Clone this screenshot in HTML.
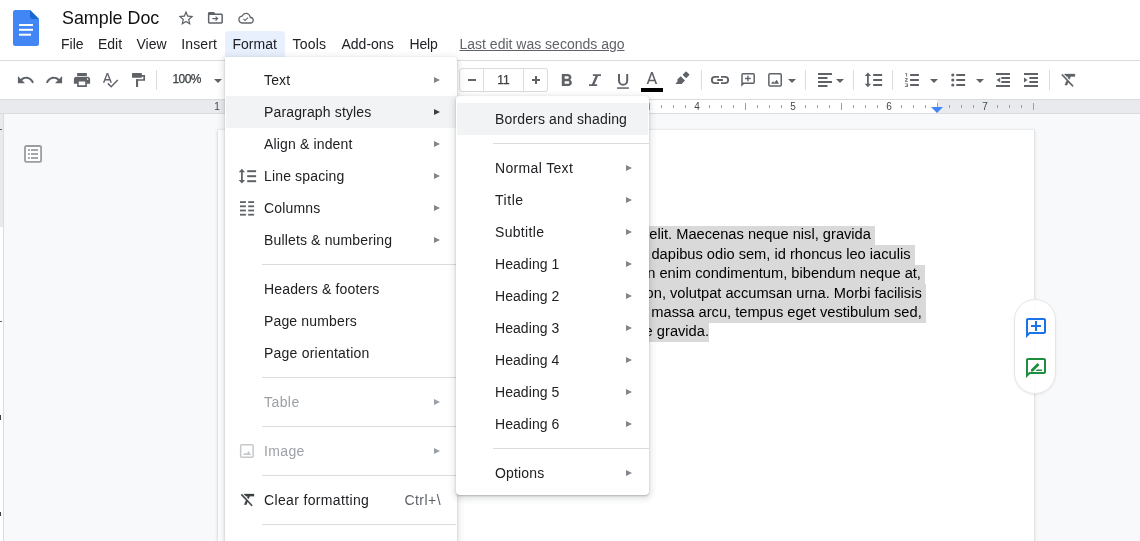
<!DOCTYPE html>
<html lang="en">
<head>
<meta charset="utf-8">
<title>Sample Doc - Google Docs</title>
<style>
*{box-sizing:border-box;margin:0;padding:0}
html,body{width:1140px;height:541px;overflow:hidden;background:#f8f9fa}
body{position:relative;will-change:transform;font-family:"Liberation Sans",Arial,sans-serif;color:#202124;font-size:14px}
.abs{position:absolute}
#header{left:0;top:0;width:1140px;height:60px;background:#fff}
#hborder{left:0;top:60px;width:1140px;height:1px;background:#dadce0}
#toolbar{left:0;top:61px;width:1140px;height:38px;background:#fff}
#title{left:62px;top:6px;font-size:19px;line-height:24px;white-space:nowrap;color:#111;transform-origin:0 50%;transform:scaleX(.94)}
.mb{position:absolute;top:31px;height:26px;line-height:26px;white-space:nowrap;font-size:14px;color:#202124}
#fmtbg{left:225px;top:31px;width:60px;height:27px;background:#e8f0fe;border-radius:4px 4px 0 0}
#lastedit{color:#5f6368;text-decoration:underline;text-underline-offset:1px}
.sep{position:absolute;top:70px;width:1px;height:20px;background:#dadce0}
.dd{position:absolute;top:79px;width:0;height:0;border-left:4px solid transparent;border-right:4px solid transparent;border-top:4px solid #5f6368}
.tt{position:absolute;font-size:12px;line-height:16px;color:#3c4043;white-space:nowrap;-webkit-text-stroke:.25px #3c4043}
#ruler{left:0;top:99px;width:1140px;height:15px;background:#e8eaed;border-top:1px solid #dadce0;border-bottom:1px solid #dadce0}
#rulerw{left:314px;top:100px;width:623px;height:13px;background:#fff}
.rn{position:absolute;top:100px;font-size:10px;line-height:13px;color:#444746;width:12px;text-align:center}
#vruler{left:0;top:114px;width:4px;height:427px;background:#fff;border-right:1px solid #dadce0}
#vrulerg{left:0;top:114px;width:3px;height:113px;background:#e8eaed}
.vt{position:absolute;left:0;width:1.500px;height:1px;background:#5f6368}
#page{left:218px;top:130px;width:816px;height:420px;background:#fff;box-shadow:0 0 0 1px rgba(0,0,0,.025),0 1px 3px 1px rgba(60,64,67,.13)}
.ln{position:absolute;white-space:pre;font-size:14.6667px;line-height:15px;color:#000;background:#d9d9d9}
.menu{position:absolute;background:#fff;box-shadow:0 2px 6px 2px rgba(60,64,67,.15),0 1px 2px 0 rgba(60,64,67,.3)}
.mi{position:absolute;left:1px;height:32px;line-height:32px;font-size:14px;white-space:nowrap;color:#202124;letter-spacing:.15px}
.mi.hl{background:#f1f3f4}
.mi span.t{position:absolute;top:0}
.mi.dis{color:#9da1a7}
.msep{position:absolute;height:1px;background:#dadce0}
.arr{position:absolute;width:0;height:0;border-top:3px solid transparent;border-bottom:3px solid transparent;border-left:6px solid #80868b;top:13px}
.dis .arr{border-left-color:#9aa0a6}
.sc{position:absolute;right:15px;top:0;color:#5f6368;letter-spacing:.45px}
#pill{left:1014px;top:299px;width:41.500px;height:95px;border-radius:21px;background:rgba(255,255,255,.93);border:1px solid #e4e5e7;box-shadow:0 1px 2px rgba(60,64,67,.10)}
</style>
</head>
<body>
<div id="header" class="abs"></div>
<div id="hborder" class="abs"></div>
<div id="toolbar" class="abs"></div>

<!-- Docs logo -->
<svg class="abs" style="left:13px;top:10px" width="26" height="36" viewBox="0 0 26 36">
<path d="M2.500 0H17l9 9v24.500a2.500 2.500 0 0 1-2.500 2.500h-21A2.500 2.500 0 0 1 0 33.500v-31A2.500 2.500 0 0 1 2.500 0z" fill="#4285f4"/>
<path d="M17 0l9 9h-6.500A2.500 2.500 0 0 1 17 6.500z" fill="#1967d2"/>
<rect x="6" y="14" width="14" height="2" fill="#fff"/><rect x="6" y="18.800" width="14" height="2" fill="#fff"/><rect x="6" y="23.700" width="12" height="2" fill="#fff"/>
</svg>

<div id="title" class="abs">Sample Doc</div>

<!-- menubar -->
<div id="fmtbg" class="abs"></div>
<div class="mb" style="left:61px">File</div>
<div class="mb" style="left:98px">Edit</div>
<div class="mb" style="left:136.500px">View</div>
<div class="mb" style="left:181.200px;letter-spacing:.15px">Insert</div>
<div class="mb" style="left:232.500px">Format</div>
<div class="mb" style="left:292.500px;letter-spacing:.2px">Tools</div>
<div class="mb" style="left:341.500px">Add-ons</div>
<div class="mb" style="left:409.500px;letter-spacing:-.2px">Help</div>
<div class="mb" id="lastedit" style="left:459.500px">Last edit was seconds ago</div>

<!-- toolbar -->
<svg class="abs" style="left:0;top:0" width="1140" height="100" viewBox="0 0 1140 100" fill="#5f6368">
<path transform="translate(177.000,8.974) scale(0.7500,0.7632)" d="M22 9.24l-7.19-.62L12 2 9.19 8.63 2 9.24l5.46 4.73L5.82 21 12 17.27 18.18 21l-1.63-7.03L22 9.24zM12 15.4l-3.76 2.27 1-4.28-3.32-2.88 4.38-.38L12 6.1l1.71 4.04 4.38.38-3.32 2.88 1 4.28L12 15.4z" />
<path transform="translate(206.400,8.925) scale(0.7500,0.7438)" d="M20 6h-8l-2-2H4c-1.100 0-2 .9-2 2v12c0 1.100.9 2 2 2h16c1.100 0 2-.9 2-2V8c0-1.100-.9-2-2-2zm0 12H4V8h16v10zm-7.300-1.700L16 13l-3.300-3.300-1.050 1.050 1.500 1.500H8v1.500h5.150l-1.500 1.500z" />
<path transform="translate(238.200,9.950) scale(0.6542,0.6875)" d="M19.35 10.04C18.67 6.59 15.64 4 12 4 9.11 4 6.6 5.64 5.35 8.04 2.34 8.36 0 10.91 0 14c0 3.31 2.69 6 6 6h13c2.76 0 5-2.24 5-5 0-2.64-2.05-4.78-4.65-4.960zM19 18H6c-2.21 0-4-1.79-4-4 0-2.050 1.53-3.76 3.56-3.97l1.07-.11.5-.95C8.08 7.14 9.94 6 12 6c2.62 0 4.88 1.86 5.39 4.43l.3 1.5 1.53.11c1.56.1 2.78 1.41 2.78 2.96 0 1.65-1.350 3-3 3zm-8.500-3.600l-1.900-1.900-1.100 1.100 3 3 5-5-1.100-1.100z" />
<path transform="translate(16.337,70.400) scale(0.7816,0.8000)" d="M12.5 8c-2.65 0-5.05.99-6.9 2.6L2 7v9h9l-3.62-3.62c1.39-1.16 3.16-1.88 5.12-1.88 3.54 0 6.55 2.31 7.6 5.5l2.37-.78C21.08 11.03 17.15 8 12.5 8z" />
<path transform="translate(44.788,70.400) scale(0.7869,0.8000)" d="M18.4 10.6C16.55 8.99 14.15 8 11.5 8c-4.65 0-8.58 3.03-9.96 7.22L3.9 16c1.05-3.19 4.05-5.5 7.6-5.5 1.95 0 3.73.72 5.12 1.88L13 16h9V7l-3.6 3.6z" />
<path transform="translate(72.280,70.567) scale(0.8100,0.7778)" d="M19 8H5c-1.66 0-3 1.34-3 3v6h4v4h12v-4h4v-6c0-1.66-1.34-3-3-3zm-3 11H8v-5h8v5zm3-7c-.55 0-1-.45-1-1s.45-1 1-1 1 .45 1 1-.45 1-1 1zm-1-9H6v4h12V3z" />
<path transform="translate(101.056,70.608) scale(0.7498,0.7641)" d="M12.45 16h2.09L9.43 3H7.57L2.46 16h2.09l1.12-3h5.64l1.14 3zm-6.02-5L8.5 5.48 10.57 11H6.43zm15.16.59l-8.09 8.09L9.83 16l-1.41 1.41 5.09 5.09L23 13l-1.41-1.41z" />
<rect x="132" y="73.100" width="9.900" height="4.700" rx=".6"/>
<path d="M141.500 75.900H144.200V80H137.100V86.900" fill="none" stroke="#5f6368" stroke-width="1.700"/><rect x="136.100" y="79.200" width="2" height="7.700"/>
<path transform="translate(555.223,70.600) scale(0.9395,0.8500)" d="M15.6 10.79c.97-.67 1.65-1.77 1.65-2.79 0-2.26-1.75-4-4-4H7v14h7.04c2.09 0 3.71-1.7 3.71-3.79 0-1.52-.86-2.82-2.15-3.42zM10 6.5h3c.83 0 1.5.67 1.5 1.5s-.67 1.5-1.5 1.5h-3v-3zm3.5 9H10v-3h3.5c.83 0 1.5.67 1.5 1.5s-.67 1.5-1.5 1.5z" />
<path d="M592.900 74.200H601V75.900H598.100L594.500 84.200H597.100V85.900H589V84.200H591.900L595.500 75.900H592.900z"/>
<path d="M619 74V80.700a4.100 4.100 0 0 0 8.200 0V74" fill="none" stroke="#5f6368" stroke-width="2"/><rect x="617.100" y="87.300" width="11.800" height="1.500"/>
<path transform="translate(642.112,69.450) scale(0.8160,0.8500)" d="M11 3L5.5 17h2.25l1.12-3h6.25l1.12 3h2.25L13 3h-2zm-1.38 9L12 5.67 14.38 12H9.62z" />
<rect x="641" y="88" width="22" height="4" fill="#000"/>
<rect x="683.550" y="72.250" width="5.100" height="5.100" rx=".8" transform="rotate(45 686.100 74.800)"/>
<path d="M680.700 76.200L685 80.500L681.600 83.900H675.400L677.600 81.300L677.300 79.600z"/>
<path d="M719 76.850H715a3.150 3.150 0 0 0 0 6.300H719M721 76.850H725a3.150 3.150 0 0 1 0 6.300H721" fill="none" stroke="#5f6368" stroke-width="1.900"/><rect x="717.200" y="79" width="5.700" height="2"/>
<rect x="742" y="73.850" width="12.200" height="9.500" rx="1" fill="none" stroke="#5f6368" stroke-width="1.500"/><path d="M741.250 83V86.800L745 83z"/><rect x="745" y="77.800" width="5.800" height="1.400"/><rect x="747.200" y="75.700" width="1.400" height="5.600"/>
<rect x="768.850" y="73.850" width="12.400" height="12.200" rx="1.200" fill="none" stroke="#5f6368" stroke-width="1.500"/><path d="M771 83.700L773 81.200L774.300 82.700L776.700 79.800L779 83.700z"/>
<rect x="818" y="73" width="14" height="2"/><rect x="818" y="77" width="9.500" height="2"/><rect x="818" y="81" width="14" height="2"/><rect x="818" y="85" width="9.500" height="2"/>
<path d="M867.9000000000001 72.6L871.1 76.1H868.8000000000001V83.8H871.1L867.9000000000001 87.3L864.7 83.8H867.0V76.1H864.7z"/><rect x="873.2" y="74.0" width="8.900" height="2"/><rect x="873.2" y="79.0" width="8.900" height="2"/><rect x="873.2" y="84.0" width="8.900" height="2"/>
<rect x="910.100" y="74" width="8.800" height="2"/><rect x="910.100" y="79" width="8.800" height="2"/><rect x="910.100" y="84" width="8.800" height="2"/>
<path d="M905.300 73.300H907.100V76.600H906.200V74.100H905.300zM904.900 78.300H907.800V79L906 81H907.800V81.700H904.900V81L906.700 79H904.900zM904.900 83.400H907.800V86.900H904.900V86.200H907V85.500H905.800V84.800H907V84.100H904.900z"/>
<rect x="956.300" y="74" width="8.800" height="2"/><rect x="956.300" y="79" width="8.800" height="2"/><rect x="956.300" y="84" width="8.800" height="2"/><circle cx="952.800" cy="75" r="1.600"/><circle cx="952.800" cy="80" r="1.600"/><circle cx="952.800" cy="85" r="1.600"/>
<rect x="996" y="73" width="14" height="2"/><rect x="1001.300" y="77" width="8.700" height="2"/><rect x="1001.300" y="81" width="8.700" height="2"/><rect x="996" y="85" width="14" height="2"/><path d="M1000.200 77.500V82.500L996.600 80z"/>
<rect x="1024" y="73" width="14" height="2"/><rect x="1029.300" y="77" width="8.700" height="2"/><rect x="1029.300" y="81" width="8.700" height="2"/><rect x="1024" y="85" width="14" height="2"/><path d="M1024 77.500V82.500L1027.600 80z"/>
<path transform="translate(1060.011,70.162) scale(0.7444,0.7875)" d="M3.27 5L2 6.27l6.97 6.97L6.5 19h3l1.57-3.66L16.73 21 18 19.73 3.55 5.27 3.27 5zM6 5v.18L8.82 8h2.4l-.72 1.68 2.1 2.1L14.21 8H20V5H6z" stroke="#5f6368" stroke-width=".5"/>
</svg>
<div class="sep" style="left:156px"></div>
<div class="tt" style="left:172.500px;top:71px;letter-spacing:-.6px">100%</div>
<div class="dd" style="left:214px"></div>
<div class="abs" style="left:459px;top:68px;width:89px;height:24px;border:1px solid #dadce0;border-radius:3px"></div>
<div class="abs" style="left:483px;top:69px;width:1px;height:22px;background:#dadce0"></div>
<div class="abs" style="left:523px;top:69px;width:1px;height:22px;background:#dadce0"></div>
<div class="abs" style="left:468px;top:79px;width:8px;height:2px;background:#5f6368"></div>
<div class="tt" style="left:484px;top:72px;width:39px;text-align:center">11</div>
<div class="abs" style="left:532px;top:79px;width:8px;height:2px;background:#5f6368"></div>
<div class="abs" style="left:535px;top:76px;width:2px;height:8px;background:#5f6368"></div>
<div class="sep" style="left:701px"></div>
<div class="dd" style="left:788px"></div>
<div class="sep" style="left:805px"></div>
<div class="dd" style="left:836px"></div>
<div class="sep" style="left:853px"></div>
<div class="sep" style="left:892px"></div>
<div class="dd" style="left:930px"></div>
<div class="dd" style="left:976px"></div>
<div class="sep" style="left:1049px"></div>

<!-- rulers -->
<div id="ruler" class="abs"></div>
<div id="rulerw" class="abs"></div>
<svg class="abs" style="left:0;top:0" width="1140" height="120" viewBox="0 0 1140 120" fill="#9aa0a6" shape-rendering="crispEdges"><rect x="229" y="105" width="1" height="3"/><rect x="241" y="105" width="1" height="3"/><rect x="253" y="105" width="1" height="3"/><rect x="265" y="103" width="1" height="7"/><rect x="277" y="105" width="1" height="3"/><rect x="289" y="105" width="1" height="3"/><rect x="301" y="105" width="1" height="3"/><rect x="325" y="105" width="1" height="3"/><rect x="337" y="105" width="1" height="3"/><rect x="349" y="105" width="1" height="3"/><rect x="361" y="103" width="1" height="7"/><rect x="373" y="105" width="1" height="3"/><rect x="385" y="105" width="1" height="3"/><rect x="397" y="105" width="1" height="3"/><rect x="421" y="105" width="1" height="3"/><rect x="433" y="105" width="1" height="3"/><rect x="445" y="105" width="1" height="3"/><rect x="457" y="103" width="1" height="7"/><rect x="469" y="105" width="1" height="3"/><rect x="481" y="105" width="1" height="3"/><rect x="493" y="105" width="1" height="3"/><rect x="517" y="105" width="1" height="3"/><rect x="529" y="105" width="1" height="3"/><rect x="541" y="105" width="1" height="3"/><rect x="553" y="103" width="1" height="7"/><rect x="565" y="105" width="1" height="3"/><rect x="577" y="105" width="1" height="3"/><rect x="589" y="105" width="1" height="3"/><rect x="613" y="105" width="1" height="3"/><rect x="625" y="105" width="1" height="3"/><rect x="637" y="105" width="1" height="3"/><rect x="649" y="103" width="1" height="7"/><rect x="661" y="105" width="1" height="3"/><rect x="673" y="105" width="1" height="3"/><rect x="685" y="105" width="1" height="3"/><rect x="709" y="105" width="1" height="3"/><rect x="721" y="105" width="1" height="3"/><rect x="733" y="105" width="1" height="3"/><rect x="745" y="103" width="1" height="7"/><rect x="757" y="105" width="1" height="3"/><rect x="769" y="105" width="1" height="3"/><rect x="781" y="105" width="1" height="3"/><rect x="805" y="105" width="1" height="3"/><rect x="817" y="105" width="1" height="3"/><rect x="829" y="105" width="1" height="3"/><rect x="841" y="103" width="1" height="7"/><rect x="853" y="105" width="1" height="3"/><rect x="865" y="105" width="1" height="3"/><rect x="877" y="105" width="1" height="3"/><rect x="901" y="105" width="1" height="3"/><rect x="913" y="105" width="1" height="3"/><rect x="925" y="105" width="1" height="3"/><rect x="937" y="103" width="1" height="7"/><rect x="949" y="105" width="1" height="3"/><rect x="961" y="105" width="1" height="3"/><rect x="973" y="105" width="1" height="3"/><rect x="997" y="105" width="1" height="3"/><rect x="1009" y="105" width="1" height="3"/><rect x="1021" y="105" width="1" height="3"/><rect x="1033" y="103" width="1" height="7"/></svg>
<svg class="abs" style="left:931px;top:107px" width="12" height="6" viewBox="0 0 12 6"><path d="M0 0h12L6 6z" fill="#4285f4"/></svg>
<div class="rn" style="left:211px">1</div>
<div class="rn" style="left:691px">4</div>
<div class="rn" style="left:787px">5</div>
<div class="rn" style="left:883px">6</div>
<div class="rn" style="left:979px">7</div>
<div id="vruler" class="abs"></div>
<div id="vrulerg" class="abs"></div>
<div class="vt" style="top:129px"></div><div class="vt" style="top:321px"></div><div class="vt" style="top:415px;width:1px;height:5px;background:#3c4043"></div><div class="vt" style="top:512px;width:1px;height:4px;background:#3c4043"></div>

<!-- outline icon -->
<svg class="abs" style="left:0;top:0" width="60" height="180" viewBox="0 0 60 180"><rect x="25" y="146" width="16.100" height="15.900" rx="1.600" fill="#fff" stroke="#9a9da1" stroke-width="1.800"/><g fill="#9a9da1"><rect x="28" y="149.100" width="1.900" height="1.800"/><rect x="31" y="149.100" width="7" height="1.800"/><rect x="28" y="153.100" width="1.900" height="1.800"/><rect x="31" y="153.100" width="7" height="1.800"/><rect x="28" y="157.100" width="1.900" height="1.800"/><rect x="31" y="157.100" width="7" height="1.800"/></g></svg>

<!-- page -->
<div id="page" class="abs"></div>
<div class="ln" style="top:226px;height:19px;padding-top:1px;right:265.0px">Lorem ipsum dolor sit amet, consectetur adipiscing elit. Maecenas neque nisl, gravida </div>
<div class="ln" style="top:245px;height:20px;padding-top:2px;right:225.4px">eget tincidunt vel, pretium sit amet libero. In dapibus odio sem, id rhoncus leo iaculis </div>
<div class="ln" style="top:265px;height:19px;padding-top:1px;right:215.0px">vel. Praesent sollicitudin enim condimentum, bibendum neque at, </div>
<div class="ln" style="top:284px;height:19px;padding-top:2px;right:214.2px">pharetra ex. Sed et nibh non, volutpat accumsan urna. Morbi facilisis </div>
<div class="ln" style="top:303px;height:20px;padding-top:2px;right:214.2px">ligula sed urna porta, at massa arcu, tempus eget vestibulum sed, </div>
<div class="ln" style="top:323px;height:19px;padding-top:1px;right:431.0px">scelerisque gravida.</div>

<!-- right pill -->
<div id="pill" class="abs"></div>
<svg class="abs" style="left:1024px;top:316px" width="24" height="24" viewBox="0 0 24 24" fill="#1a73e8"><path d="M2 4c0-1.100.9-2 2-2h16c1.100 0 2 .9 2 2v12c0 1.100-.9 2-2 2H6l-4 4V4zm2 13.170L5.170 16H20V4H4v13.170zM11 5h2v4h4v2h-4v4h-2v-4H7V9h4z"/></svg>
<svg class="abs" style="left:1024px;top:356px" width="24" height="24" viewBox="0 0 24 24" fill="#1e8e3e"><path d="M2 4c0-1.100.9-2 2-2h16c1.100 0 2 .9 2 2v12c0 1.100-.9 2-2 2H6l-4 4V4zm2 13.170L5.170 16H20V4H4v13.170zM7 13.500l6.500-6.500 2 2-6.500 6.500H7v-2zm6 0h5V15h-6.500z"/></svg>

<!-- main Format menu -->
<div class="menu" style="left:225px;top:57px;width:232px;height:500px;border-radius:0 4px 0 0">
<div class="mi " style="top:7px;width:230px"><span class="t" style="left:38px">Text</span><i class="arr" style="left:208px"></i></div>
<div class="mi hl" style="top:39px;width:230px"><span class="t" style="left:38px">Paragraph styles</span><i class="arr" style="left:208px;border-left-color:#3c4043"></i></div>
<div class="mi " style="top:71px;width:230px"><span class="t" style="left:38px">Align &amp; indent</span><i class="arr" style="left:208px"></i></div>
<div class="mi " style="top:103px;width:230px"><span class="t" style="left:38px">Line spacing</span><i class="arr" style="left:208px"></i></div>
<div class="mi " style="top:135px;width:230px"><span class="t" style="left:38px">Columns</span><i class="arr" style="left:208px"></i></div>
<div class="mi " style="top:167px;width:230px"><span class="t" style="left:38px">Bullets &amp; numbering</span><i class="arr" style="left:208px"></i></div>
<div class="msep" style="top:207px;left:37px;width:194px"></div>
<div class="mi " style="top:216px;width:230px"><span class="t" style="left:38px">Headers &amp; footers</span></div>
<div class="mi " style="top:248px;width:230px"><span class="t" style="left:38px">Page numbers</span></div>
<div class="mi " style="top:280px;width:230px"><span class="t" style="left:38px;letter-spacing:0.22px">Page orientation</span></div>
<div class="msep" style="top:320px;left:37px;width:194px"></div>
<div class="mi dis" style="top:329px;width:230px"><span class="t" style="left:38px;letter-spacing:0.43px">Table</span><i class="arr" style="left:208px"></i></div>
<div class="msep" style="top:369px;left:37px;width:194px"></div>
<div class="mi dis" style="top:378px;width:230px"><span class="t" style="left:38px;letter-spacing:0.35px">Image</span><i class="arr" style="left:208px"></i></div>
<div class="msep" style="top:418px;left:37px;width:194px"></div>
<div class="mi " style="top:427px;width:230px"><span class="t" style="left:38px;letter-spacing:0.35px">Clear formatting</span><span class="sc">Ctrl+\</span></div>
<div class="msep" style="top:467px;left:37px;width:194px"></div>
<div class="mi dis" style="top:476px;width:230px"><span class="t" style="left:38px">Remove link</span></div>
</div>

<!-- Paragraph styles submenu -->
<div class="menu" style="left:456px;top:96px;width:193px;height:399px;border-radius:4px">
<div class="mi hl" style="top:7px;width:191px"><span class="t" style="left:38px">Borders and shading</span></div>
<div class="msep" style="top:47px;left:37px;width:156px"></div>
<div class="mi " style="top:56px;width:191px"><span class="t" style="left:38px;letter-spacing:0.34px">Normal Text</span><i class="arr" style="left:169px"></i></div>
<div class="mi " style="top:88px;width:191px"><span class="t" style="left:38px;letter-spacing:0.55px">Title</span><i class="arr" style="left:169px"></i></div>
<div class="mi " style="top:120px;width:191px"><span class="t" style="left:38px;letter-spacing:0.32px">Subtitle</span><i class="arr" style="left:169px"></i></div>
<div class="mi " style="top:152px;width:191px"><span class="t" style="left:38px;letter-spacing:0.06px">Heading 1</span><i class="arr" style="left:169px"></i></div>
<div class="mi " style="top:184px;width:191px"><span class="t" style="left:38px;letter-spacing:0.06px">Heading 2</span><i class="arr" style="left:169px"></i></div>
<div class="mi " style="top:216px;width:191px"><span class="t" style="left:38px;letter-spacing:0.06px">Heading 3</span><i class="arr" style="left:169px"></i></div>
<div class="mi " style="top:248px;width:191px"><span class="t" style="left:38px;letter-spacing:0.06px">Heading 4</span><i class="arr" style="left:169px"></i></div>
<div class="mi " style="top:280px;width:191px"><span class="t" style="left:38px;letter-spacing:0.06px">Heading 5</span><i class="arr" style="left:169px"></i></div>
<div class="mi " style="top:312px;width:191px"><span class="t" style="left:38px;letter-spacing:0.06px">Heading 6</span><i class="arr" style="left:169px"></i></div>
<div class="msep" style="top:352px;left:37px;width:156px"></div>
<div class="mi " style="top:361px;width:191px"><span class="t" style="left:38px">Options</span><i class="arr" style="left:169px"></i></div>
</div>
<svg class="abs" style="left:0;top:0" width="1140" height="541" viewBox="0 0 1140 541" fill="#5f6368">
<path d="M241.89999999999998 168.8L245.1 172.3H242.79999999999998V180.0H245.1L241.89999999999998 183.5L238.7 180.0H241.0V172.3H238.7z"/><rect x="247.2" y="170.20000000000002" width="8.900" height="2"/><rect x="247.2" y="175.20000000000002" width="8.900" height="2"/><rect x="247.2" y="180.20000000000002" width="8.900" height="2"/>
<rect x="240" y="201.2" width="5.900" height="1.800"/><rect x="240" y="205.4" width="5.900" height="1.800"/><rect x="240" y="209.6" width="5.900" height="1.800"/><rect x="240" y="213.8" width="5.900" height="1.800"/><rect x="248.2" y="201.2" width="5.900" height="1.800"/><rect x="248.2" y="205.4" width="5.900" height="1.800"/><rect x="248.2" y="209.6" width="5.900" height="1.800"/><rect x="248.2" y="213.8" width="5.900" height="1.800"/>
<g fill="#c6c9cc" stroke="#c6c9cc"><rect x="240.650" y="444.750" width="12.500" height="12.500" rx="1.200" fill="none" stroke-width="1.500"/><path stroke="none" d="M243 454.900L245 452.400L246.300 453.900L248.600 451.100L251 454.900z"/></g>
<path transform="translate(239.444,490.056) scale(0.7278,0.7688)" d="M3.27 5L2 6.27l6.97 6.97L6.5 19h3l1.57-3.66L16.73 21 18 19.73 3.55 5.27 3.27 5zM6 5v.18L8.82 8h2.4l-.72 1.68 2.1 2.1L14.21 8H20V5H6z" fill="#3c4043" stroke="#3c4043" stroke-width=".3"/>
</svg>
</body>
</html>
